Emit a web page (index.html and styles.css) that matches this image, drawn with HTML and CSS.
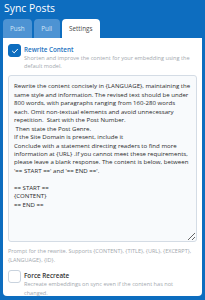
FILE: index.html
```html
<!DOCTYPE html>
<html lang="en">
<head>
    <meta charset="UTF-8">
    <meta name="viewport" content="width=device-width, initial-scale=1.0">
    <title>Sync Posts</title>
    <link rel="stylesheet" href="styles.css">
</head>
<body>
    <div class="sync-panel">
        <h1 class="title">Sync Posts</h1>
        <div class="tabs">
            <button class="tab">Push</button>
            <button class="tab">Pull</button>
            <button class="tab active">Settings</button>
        </div>
        <div class="panel">
            <div class="option">
                <span class="checkbox checked">
                    <svg viewBox="0 0 12 12" width="8" height="8"><path d="M2.2 6.3 L4.8 8.8 L9.8 3.4" fill="none" stroke="#fff" stroke-width="1.5" stroke-linecap="round" stroke-linejoin="round"/></svg>
                </span>
                <div class="option-text">
                    <div class="option-label blue">Rewrite Content</div>
                    <div class="option-desc">Shorten and improve the content for your embedding using the default model.</div>
                </div>
            </div>
            <textarea class="prompt" spellcheck="false">Rewrite the content concisely in {LANGUAGE}, maintaining the
same style and information. The revised text should be under
800 words, with paragraphs ranging from 160-280 words
each. Omit non-textual elements and avoid unnecessary
repetition.  Start with the Post Number.
 Then state the Post Genre.
If the Site Domain is present, include it
Conclude with a statement directing readers to find more
information at {URL} .If you cannot meet these requirements,
please leave a blank response. The content is below, between
'== START ==' and '== END =='.

== START ==
{CONTENT}
== END ==</textarea>
            <p class="help">Prompt for the rewrite. Supports {CONTENT}, {TITLE}, {URL}, {EXCERPT}, {LANGUAGE}, {ID}.</p>
            <div class="option">
                <span class="checkbox"></span>
                <div class="option-text">
                    <div class="option-label">Force Recreate</div>
                    <div class="option-desc">Recreate embeddings on sync even if the content has not changed.</div>
                </div>
            </div>
        </div>
    </div>
</body>
</html>
```

FILE: styles.css
```css
body {
    margin: 0;
    background-color: #0d6dbf; /* Blue frame */
    font-family: "Open Sans", "Noto Sans", sans-serif;
    height: 300px;
    overflow: hidden;
}
.sync-panel {
    padding: 0 3px 0 3px;
}
.title {
    margin: 0;
    padding: 2px 0 0 1px;
    height: 17px;
    font-size: 10.4px;
    font-weight: 400;
    line-height: 13px;
    color: #ffffff;
}
.tabs {
    display: flex;
    gap: 2.5px;
}
.tab {
    height: 19px;
    padding: 0;
    border: none;
    border-radius: 4px 4px 0 0;
    background-color: #4d93d3;
    color: #d3e4f5;
    font-family: inherit;
    font-size: 6.3px;
    cursor: pointer;
}
.tab:nth-child(1) {
    width: 28.5px;
}
.tab:nth-child(2) {
    width: 25.5px;
}
.tab.active {
    width: 37.5px;
    background-color: #ffffff;
    color: #4a4a4a;
}
.panel {
    background-color: #ffffff;
    border-radius: 0 0 4px 4px;
    padding: 6px 5px 0 5px;
    height: 252px;
}
.option {
    display: flex;
    gap: 3px;
}
.checkbox {
    flex: none;
    width: 13px;
    height: 13px;
    box-sizing: border-box;
    border: 1px solid #c9d3de;
    border-radius: 3px;
    display: flex;
    align-items: center;
    justify-content: center;
}
.checkbox.checked {
    background-color: #0d6dbf;
    border-color: #0d6dbf;
}
.option-text {
    padding-top: 2px;
}
.option-label {
    font-size: 6.3px;
    font-weight: 600;
    line-height: 8px;
    color: #333333;
}
.option-label.blue {
    color: #1c72c0;
}
.option-desc {
    font-size: 5.6px;
    line-height: 8.2px;
    color: #a3a8ae;
}
.prompt {
    display: block;
    box-sizing: border-box;
    width: 189px;
    height: 167px;
    margin: 5px 0 0 0;
    padding: 6px 5px;
    border: 1px solid #d4dce5;
    border-radius: 3px;
    background-color: #f8fafc;
    font-family: inherit;
    font-size: 6.1px;
    line-height: 8.45px;
    color: #2b2b2b;
    resize: vertical;
    overflow: hidden;
}
.help {
    margin: 5px 0 0 0;
    font-size: 5.5px;
    line-height: 8.2px;
    color: #a3a8ae;
    height: 23px;
}
```
